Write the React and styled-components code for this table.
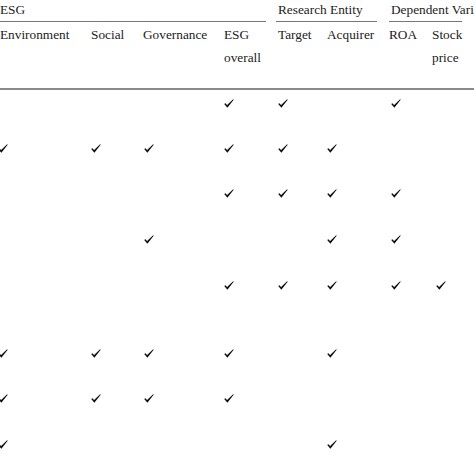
import React from 'react';
import styled, { createGlobalStyle } from 'styled-components';

const GlobalStyle = createGlobalStyle`
  html, body {
    margin: 0;
    padding: 0;
    background: #fff;
    overflow: hidden;
  }
  body {
    width: 474px;
    height: 474px;
    font-family: "Liberation Serif", "Times New Roman", serif;
    color: #222;
  }
`;

const COLS = '91px 52px 81px 54px 49px 62px 43px 1fr';

const Table = styled.div`
  width: 474px;
  font-size: 13.3px;
`;

const GroupRow = styled.div`
  display: grid;
  grid-template-columns: ${COLS};
  height: 23px;
`;

const GroupCell = styled.div`
  grid-column: span ${p => p.span};
  margin-left: ${p => p.inset}px;
  margin-right: 12px;
  line-height: 20px;
  height: 21px;
  border-bottom: 1.5px solid #777;
  white-space: nowrap;
`;

const GroupLabel = styled.span`
  padding-left: ${p => p.pad || 0}px;
`;

const SubRow = styled.div`
  display: grid;
  grid-template-columns: ${COLS};
  padding-bottom: 19px;
  border-bottom: 2px solid #8a8a8a;
`;

const SubCell = styled.div`
  line-height: 23px;
  white-space: nowrap;
`;

const Row = styled.div`
  display: grid;
  grid-template-columns: ${COLS};
  height: ${p => p.h}px;
  align-items: start;
`;

const Cell = styled.div`
  padding-top: 6px;
  padding-left: ${p => (p.shift > 0 ? p.shift : 0)}px;
  margin-left: ${p => (p.shift < 0 ? p.shift : 0)}px;
`;

const Check = () => (
  <svg width="10" height="9" viewBox="0 0 10 9">
    <path d="M0.2 5.1 L1.4 4.3 L3.1 6.1 L9.1 0.2 L9.7 0.7 L3.4 8.7 Z" fill="#111" />
  </svg>
);

const shifts = [-2, 0, 1, 0, 0, 0, 2, 4];

const rows = [
  { h: 45, on: [3, 4, 6] },
  { h: 45, on: [0, 1, 2, 3, 4, 5] },
  { h: 46, on: [3, 4, 5, 6] },
  { h: 46, on: [2, 5, 6] },
  { h: 68, on: [3, 4, 5, 6, 7] },
  { h: 45, on: [0, 1, 2, 3, 5] },
  { h: 46, on: [0, 1, 2, 3] },
  { h: 46, on: [0, 5] },
];

const subHeads = [
  'Environment', 'Social', 'Governance', ['ESG', 'overall'],
  'Target', 'Acquirer', 'ROA', ['Stock', 'price'],
];

export default function App() {
  return (
    <>
      <GlobalStyle />
      <Table>
        <GroupRow>
          <GroupCell span={4} inset={0}><GroupLabel>ESG</GroupLabel></GroupCell>
          <GroupCell span={2} inset={-2}><GroupLabel pad={2}>Research Entity</GroupLabel></GroupCell>
          <GroupCell span={2} inset={0}><GroupLabel pad={2}>Dependent Variable</GroupLabel></GroupCell>
        </GroupRow>
        <SubRow>
          {subHeads.map((s, i) => (
            <SubCell key={i}>
              {Array.isArray(s) ? <>{s[0]}<br />{s[1]}</> : s}
            </SubCell>
          ))}
        </SubRow>
        {rows.map((r, ri) => (
          <Row key={ri} h={r.h}>
            {shifts.map((sh, ci) => (
              <Cell key={ci} shift={sh}>
                {r.on.includes(ci) ? <Check /> : null}
              </Cell>
            ))}
          </Row>
        ))}
      </Table>
    </>
  );
}
